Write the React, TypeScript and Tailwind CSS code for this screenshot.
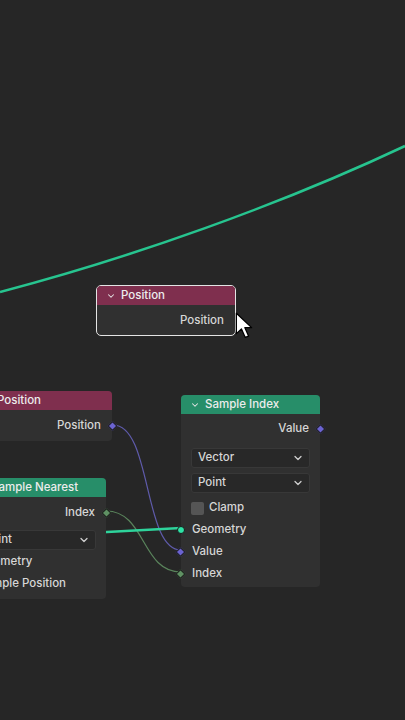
import { ChevronDown } from "lucide-react";
import type { ReactNode } from "react";

const font = { fontFamily: "Inter, 'DejaVu Sans', sans-serif" };

function Socket({ kind, side }: { kind: "geo" | "vec" | "int"; side: "left" | "right" }) {
  const pos = side === "left" ? "-left-[4px]" : "-right-[4px]";
  if (kind === "geo")
    return (
      <span
        className={`absolute ${pos} top-1/2 h-[8px] w-[8px] -translate-y-1/2 rounded-full border border-[#1a1a1a] bg-[#2ee3a6]`}
      />
    );
  const color = kind === "vec" ? "bg-[#6b63d1]" : "bg-[#5f9163]";
  return (
    <span
      className={`absolute ${pos} top-1/2 h-[7px] w-[7px] -translate-y-1/2 rotate-45 border border-[#1a1a1a] ${color}`}
    />
  );
}

function Header({ title, color }: { title: string; color: string }) {
  return (
    <div className={`flex h-[19px] items-center gap-[5px] rounded-t-[4px] px-[9px] ${color}`}>
      <ChevronDown size={10} strokeWidth={2.5} className="text-[#e6e6e6]" />
      <span className="text-[#ececec]">{title}</span>
    </div>
  );
}

function Row({ children, right, socket }: { children: ReactNode; right?: boolean; socket?: ReactNode }) {
  return (
    <div className={`relative flex h-[22px] items-center px-[11px] ${right ? "justify-end" : ""}`}>
      <span>{children}</span>
      {socket}
    </div>
  );
}

function Dropdown({ label }: { label: string }) {
  return (
    <div className="mx-[10px] flex h-[20px] items-center justify-between rounded-[3px] border border-[#383838] bg-[#282828] pl-[6px] pr-[5px]">
      <span>{label}</span>
      <ChevronDown size={12} strokeWidth={2.5} className="text-[#cfcfcf]" />
    </div>
  );
}

export default function App() {
  return (
    <div
      className="relative h-[720px] w-[405px] overflow-hidden bg-[#262626] text-[11.5px] font-medium text-[#d6d6d6]"
      style={font}
    >
      <svg className="absolute inset-0" width="405" height="720">
        <path d="M0 292 C130 258 280 205 405 146" stroke="#27c48f" strokeWidth="2.5" fill="none" />
        <path d="M113 425 C152 425 143 550 181 550" stroke="#6864c2" strokeWidth="1.2" fill="none" opacity="0.85" />
        <path d="M106 511 C146 511 141 572 181 572" stroke="#5f8e62" strokeWidth="1.2" fill="none" opacity="0.9" />
        <path d="M70 534 L181 528" stroke="#2ed39b" strokeWidth="2.6" fill="none" />
      </svg>

      {/* Position (left, partly off screen) */}
      <div className="absolute left-[-27px] top-[391px] w-[139px] rounded-[4px] bg-[#303030] pb-[4px]">
        <Header title="Position" color="bg-[#7f2f4e]" />
        <div className="pt-[5px]">
          <Row right socket={<Socket kind="vec" side="right" />}>Position</Row>
        </div>
      </div>

      {/* Sample Nearest */}
      <div className="absolute left-[-33px] top-[478px] w-[139px] rounded-[4px] bg-[#303030] pb-[4px]">
        <Header title="Sample Nearest" color="bg-[#278e69]" />
        <div className="pt-[5px]">
          <Row right socket={<Socket kind="int" side="right" />}>Index</Row>
          <div className="mt-[6px]">
            <Dropdown label="Point" />
          </div>
          <div className="mt-[1px]">
            <Row>Geometry</Row>
            <Row>Sample Position</Row>
          </div>
        </div>
      </div>

      {/* Sample Index */}
      <div className="absolute left-[181px] top-[395px] w-[139px] rounded-[4px] bg-[#303030] pb-[2px]">
        <Header title="Sample Index" color="bg-[#278e69]" />
        <div className="pt-[4px]">
          <Row right socket={<Socket kind="vec" side="right" />}>Value</Row>
          <div className="mt-[8px] flex flex-col gap-[5px]">
            <Dropdown label="Vector" />
            <Dropdown label="Point" />
          </div>
          <div className="mt-[5px] mb-[1px] flex h-[20px] items-center gap-[5px] px-[10px]">
            <span className="h-[13px] w-[13px] rounded-[2px] bg-[#555555]" />
            <span>Clamp</span>
          </div>
          <Row socket={<Socket kind="geo" side="left" />}>Geometry</Row>
          <Row socket={<Socket kind="vec" side="left" />}>Value</Row>
          <Row socket={<Socket kind="int" side="left" />}>Index</Row>
        </div>
      </div>

      {/* Position (floating, selected) */}
      <div className="absolute left-[96px] top-[285px] w-[140px] rounded-[5px] border border-[#e4e4e4] bg-[#303030] pb-[3px]">
        <Header title="Position" color="bg-[#7f2f4e]" />
        <div className="pt-[5px]">
          <Row right>Position</Row>
        </div>
      </div>

      {/* cursor */}
      <svg className="absolute left-[235px] top-[312px]" width="18" height="28" viewBox="0 0 14 22">
        <path d="M1 1 L1 17 L5 13.3 L8 20 L10.6 18.9 L7.7 12.3 L13 12.3 Z" fill="#ffffff" stroke="#000000" strokeWidth="1" strokeLinejoin="round" />
      </svg>
    </div>
  );
}
